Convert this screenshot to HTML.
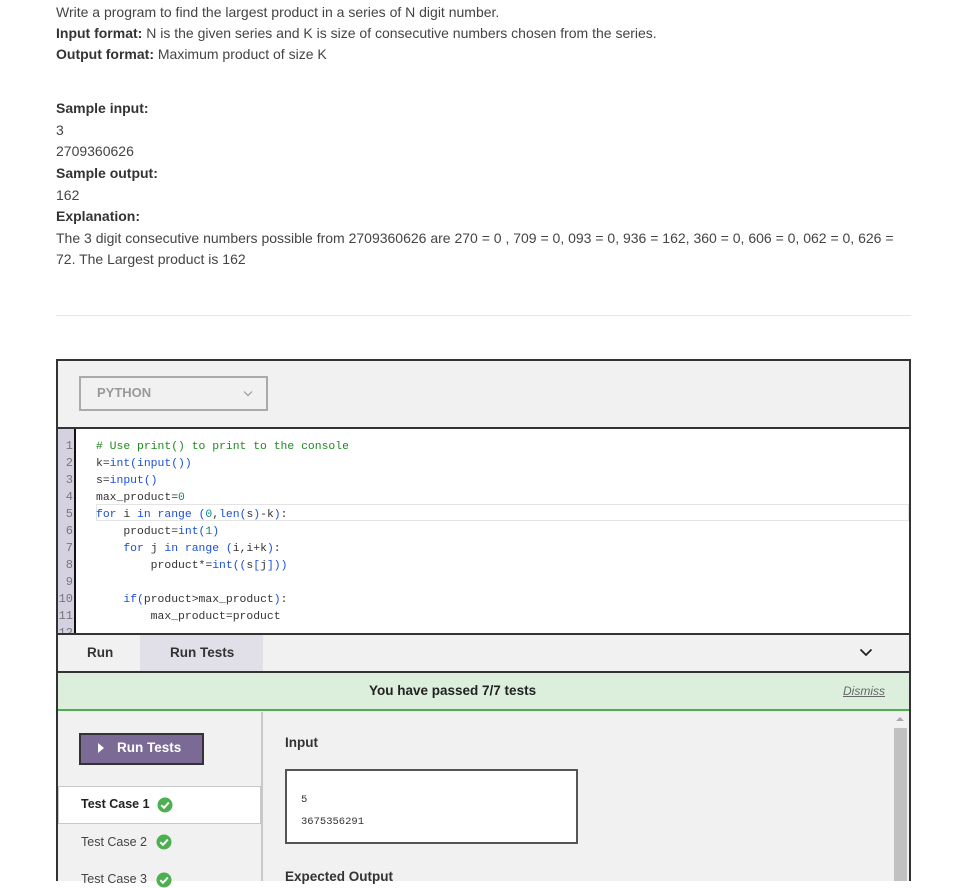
<!DOCTYPE html>
<html><head><meta charset="utf-8"><style>
*{box-sizing:border-box;margin:0;padding:0}
body{width:959px;height:881px;overflow:hidden;background:#fff;font-family:"Liberation Sans",sans-serif;color:#444;position:relative}
.t{position:absolute;left:56px;font-size:14px;white-space:nowrap;line-height:16px}
.t b{color:#333}
.a{position:absolute}
.code{position:absolute;left:96px;font-family:"Liberation Mono",monospace;font-size:11.4px;white-space:pre;color:#333;line-height:17px}
.k{color:#1a4fd8}.c{color:#1e8a1e}.n{color:#0a8a7a}
.ln{position:absolute;left:57px;width:19px;font-family:"Liberation Mono",monospace;font-size:12px;color:#777;text-align:right;padding-right:3px;line-height:17px}
</style></head><body>
<div class="t" style="top:4px">Write a program to find the largest product in a series of N digit number.</div>
<div class="t" style="top:25px"><b>Input format:</b> N is the given series and K is size of consecutive numbers chosen from the series.</div>
<div class="t" style="top:46px"><b>Output format:</b> Maximum product of size K</div>
<div class="t" style="top:100px"><b>Sample input:</b></div>
<div class="t" style="top:122px">3</div>
<div class="t" style="top:143px">2709360626</div>
<div class="t" style="top:165px"><b>Sample output:</b></div>
<div class="t" style="top:187px">162</div>
<div class="t" style="top:208px"><b>Explanation:</b></div>
<div class="t" style="top:230px">The 3 digit consecutive numbers possible from 2709360626 are 270 = 0 , 709 = 0, 093 = 0, 936 = 162, 360 = 0, 606 = 0, 062 = 0, 626 =</div>
<div class="t" style="top:251px">72. The Largest product is 162</div>
<div class="a" style="left:56px;top:315px;width:855px;height:1px;background:#e6e6e6"></div>

<div class="a" style="left:56px;top:359px;width:855px;height:522px;border:2px solid #333;border-bottom:none;background:#f1f1f1"></div>
<div class="a" style="left:79px;top:376px;width:189px;height:35px;border:2px solid #aaa;background:#f1f1f1"></div>
<div class="a" style="left:97px;top:385px;font-size:13px;font-weight:bold;color:#999">PYTHON</div>
<svg class="a" style="left:243px;top:390px" width="10" height="7"><path d="M1 1.5L5 5.5L9 1.5" fill="none" stroke="#999" stroke-width="1.2"/></svg>

<div class="a" style="left:56px;top:427px;width:855px;height:208px;background:#fff;border:2px solid #333"></div>
<div class="a" style="left:58px;top:429px;width:18px;height:204px;background:#d5d1e0;border-right:2px solid #111"></div>
<div class="a" style="left:96px;top:504px;width:813px;height:17px;border:1px solid #e4e4e4"></div>
<div class="ln" style="top:438px;height:195px;overflow:hidden">1<br>2<br>3<br>4<br>5<br>6<br>7<br>8<br>9<br>10<br>11<br>12</div>
<div class="code" style="top:439px"><span class="c"># Use print() to print to the console</span>
k=<span class="k">int(input())</span>
s=<span class="k">input()</span>
max_product=<span class="n">0</span>
<span class="k">for</span> i <span class="k">in range</span> <span class="k">(</span><span class="n">0</span>,<span class="k">len(</span>s<span class="k">)</span>-k<span class="k">)</span>:
    product=<span class="k">int(</span><span class="n">1</span><span class="k">)</span>
    <span class="k">for</span> j <span class="k">in range</span> <span class="k">(</span>i,i+k<span class="k">)</span>:
        product*=<span class="k">int((</span>s<span class="k">[</span>j<span class="k">]))</span>

    <span class="k">if(</span>product&gt;max_product<span class="k">)</span>:
        max_product=product</div>

<div class="a" style="left:140px;top:635px;width:123px;height:36px;background:#e1dfe8"></div>
<div class="a" style="left:87px;top:645px;font-size:13.5px;font-weight:bold;color:#333">Run</div>
<div class="a" style="left:170px;top:645px;font-size:13.5px;font-weight:bold;color:#333">Run Tests</div>
<svg class="a" style="left:859px;top:648px" width="14" height="9"><path d="M1.5 1.5L7 7L12.5 1.5" fill="none" stroke="#222" stroke-width="1.8"/></svg>
<div class="a" style="left:56px;top:671px;width:855px;height:2px;background:#333"></div>
<div class="a" style="left:58px;top:673px;width:851px;height:38px;background:#dcefdd;border-bottom:2px solid #4caf50"></div>
<div class="a" style="left:369px;top:683px;font-size:13.5px;font-weight:bold;color:#222">You have passed 7/7 tests</div>
<div class="a" style="left:843px;top:684px;font-size:12px;font-style:italic;text-decoration:underline;color:#666">Dismiss</div>

<div class="a" style="left:261px;top:712px;width:2px;height:169px;background:#c8c8c8"></div>
<div class="a" style="left:79px;top:733px;width:125px;height:32px;background:#7b6a96;border:2px solid #333"></div>
<svg class="a" style="left:97px;top:743px" width="8" height="10"><path d="M1 0L7 5L1 10Z" fill="#fff"/></svg>
<div class="a" style="left:117px;top:740px;font-size:13.5px;font-weight:bold;color:#fff">Run Tests</div>
<div class="a" style="left:58px;top:786px;width:203px;height:38px;background:#fff;border:1px solid #c8c8c8"></div>
<div class="a" style="left:81px;top:797px;font-size:12.5px;font-weight:bold;color:#222">Test Case 1</div>
<div class="a" style="left:81px;top:835px;font-size:12.5px;color:#444">Test Case 2</div>
<div class="a" style="left:81px;top:872px;font-size:12.5px;color:#444">Test Case 3</div>
<svg class="a" style="left:157px;top:797px" width="16" height="16"><circle cx="8" cy="8" r="7.5" fill="#4caf50"/><path d="M4.3 8.2L7 10.8L11.8 5.6" fill="none" stroke="#fff" stroke-width="2"/></svg>
<svg class="a" style="left:156px;top:834px" width="16" height="16"><circle cx="8" cy="8" r="7.5" fill="#4caf50"/><path d="M4.3 8.2L7 10.8L11.8 5.6" fill="none" stroke="#fff" stroke-width="2"/></svg>
<svg class="a" style="left:156px;top:872px" width="16" height="16"><circle cx="8" cy="8" r="7.5" fill="#4caf50"/><path d="M4.3 8.2L7 10.8L11.8 5.6" fill="none" stroke="#fff" stroke-width="2"/></svg>

<div class="a" style="left:285px;top:735px;font-size:13.5px;font-weight:bold;color:#333">Input</div>
<div class="a" style="left:285px;top:769px;width:293px;height:75px;background:#fff;border:2px solid #555"></div>
<div class="a" style="left:301px;top:789px;font-family:'Liberation Mono',monospace;font-size:10.5px;color:#333;line-height:22px">5<br>3675356291</div>
<div class="a" style="left:285px;top:869px;font-size:13.5px;font-weight:bold;color:#333">Expected Output</div>

<svg class="a" style="left:895px;top:716px" width="10" height="6"><path d="M1 5L5 1L9 5Z" fill="#aaa"/></svg>
<div class="a" style="left:894px;top:728px;width:13px;height:153px;background:#c1c1c1"></div>
</body></html>
